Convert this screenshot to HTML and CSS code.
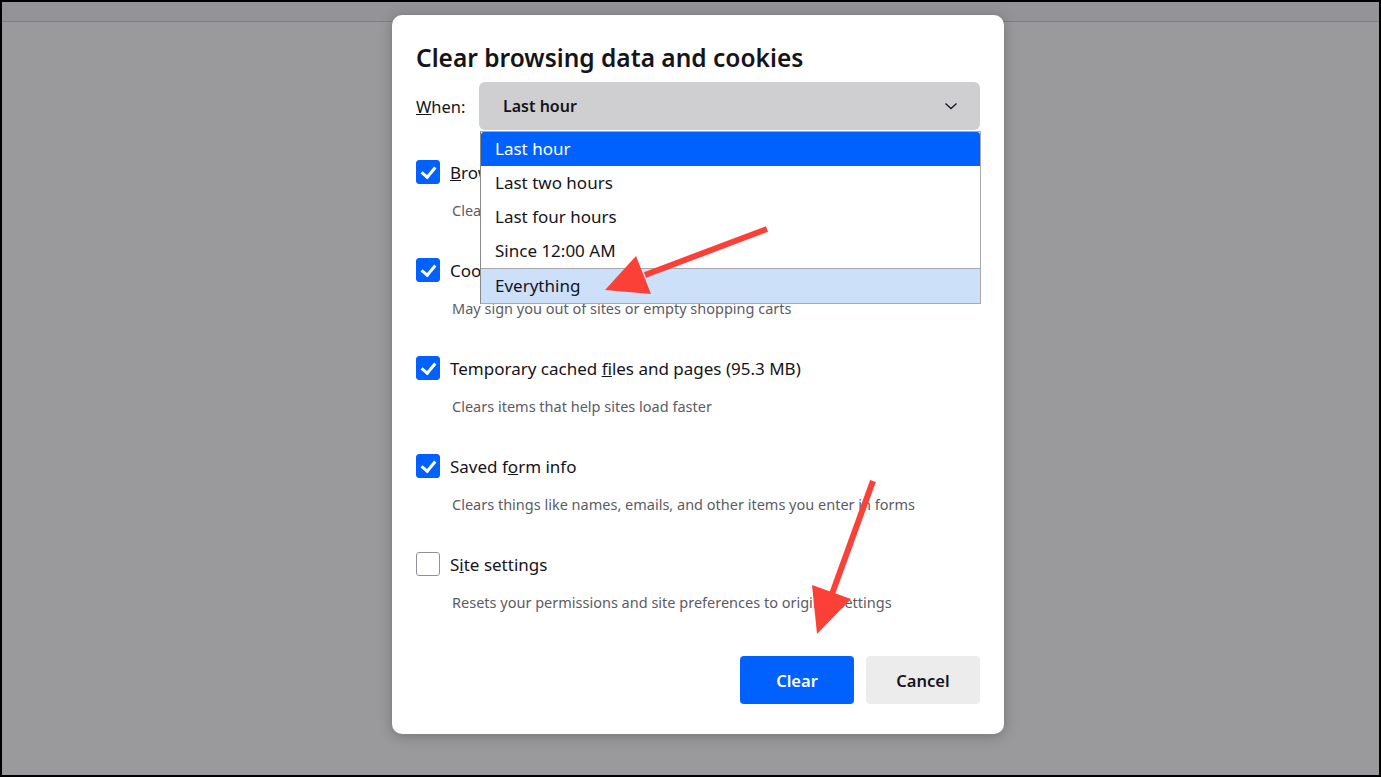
FILE: index.html
```html
<!DOCTYPE html>
<html lang="en">
<head>
    <meta charset="UTF-8">
    <title>Clear browsing data and cookies</title>
    <link rel="stylesheet" href="styles.css">
</head>
<body>
    <div class="frame">
        <div class="topbar"></div>
        <div class="page"></div>

        <div class="dialog">
            <h1>Clear browsing data and cookies</h1>
            <div class="when-row">
                <label><u>W</u>hen:</label>
                <div class="select">
                    <span>Last hour</span>
                    <svg class="chevron" width="14" height="8" viewBox="0 0 14 8"><path d="M1.5 1.5 L7 6.5 L12.5 1.5" fill="none" stroke="#1c1b22" stroke-width="1.4"/></svg>
                </div>
            </div>

            <div class="option">
                <div class="option-head">
                    <span class="check on"></span>
                    <span class="option-label"><u>B</u>rowsing and download history</span>
                </div>
                <div class="option-desc">Clears sites and downloads from history</div>
            </div>
            <div class="option">
                <div class="option-head">
                    <span class="check on"></span>
                    <span class="option-label">Cookies and site data</span>
                </div>
                <div class="option-desc">May sign you out of sites or empty shopping carts</div>
            </div>
            <div class="option">
                <div class="option-head">
                    <span class="check on"></span>
                    <span class="option-label">Temporary cached <u>f</u>iles and pages (95.3 MB)</span>
                </div>
                <div class="option-desc">Clears items that help sites load faster</div>
            </div>
            <div class="option">
                <div class="option-head">
                    <span class="check on"></span>
                    <span class="option-label">Saved f<u>o</u>rm info</span>
                </div>
                <div class="option-desc">Clears things like names, emails, and other items you enter in forms</div>
            </div>
            <div class="option">
                <div class="option-head">
                    <span class="check"></span>
                    <span class="option-label">S<u>i</u>te settings</span>
                </div>
                <div class="option-desc">Resets your permissions and site preferences to original settings</div>
            </div>

            <div class="buttons">
                <button class="btn primary">Clear</button>
                <button class="btn">Cancel</button>
            </div>

            <ul class="dropdown">
                <li class="selected">Last hour</li>
                <li>Last two hours</li>
                <li>Last four hours</li>
                <li>Since 12:00 AM</li>
                <li class="hovered">Everything</li>
            </ul>
        </div>

        <svg class="arrows" width="1381" height="777" viewBox="0 0 1381 777">
            <line x1="767" y1="229" x2="645" y2="275" stroke="#fb4137" stroke-width="6"/>
            <polygon points="605,290 636,256 651,294" fill="#fb4137"/>
            <line x1="873" y1="481" x2="832" y2="594" stroke="#fb4137" stroke-width="6"/>
            <polygon points="817,634 812,585 851,599" fill="#fb4137"/>
        </svg>
    </div>
</body>
</html>
```

FILE: styles.css
```css
body {
    margin: 0;
    background-color: #000;
    font-family: "Noto Sans", "Open Sans", sans-serif;
    color: #15141a;
}
.frame {
    position: relative;
    height: 773px;
    margin: 2px;
    background-color: #9a9a9c;
    display: flex;
    flex-direction: column;
    overflow: hidden;
}
.topbar {
    height: 19px;
    background-color: #949397;
    border-bottom: 1px solid #7f7e82;
}
.page {
    flex: 1;
}
.dialog {
    position: absolute;
    left: 390px;
    top: 13px;
    width: 564px;
    padding: 25px 24px 30px;
    background-color: #fff;
    border-radius: 10px;
    box-shadow: 0 2px 14px rgba(0,0,0,0.25);
}
h1 {
    margin: 0;
    font-size: 24.5px;
    line-height: 36px;
    font-weight: 600;
}
.when-row {
    display: flex;
    align-items: center;
    margin-top: 6px;
}
.when-row label {
    font-size: 16.5px;
    width: 63px;
}
.select {
    flex: 1;
    height: 48px;
    box-sizing: border-box;
    padding: 0 22px 0 24px;
    background-color: #cfcfd1;
    border-radius: 6px;
    display: flex;
    align-items: center;
    justify-content: space-between;
    font-size: 16px;
    font-weight: 600;
}
.option {
    margin-top: 30px;
}
.option + .option {
    margin-top: 38px;
}
.option-head {
    display: flex;
    align-items: center;
    height: 24px;
}
.check {
    width: 24px;
    height: 24px;
    box-sizing: border-box;
    border: 1px solid #8f8f9d;
    border-radius: 3px;
    margin-right: 10px;
    position: relative;
}
.check.on {
    background-color: #0061ff;
    border-color: #0061ff;
}
.check.on::after {
    content: "";
    position: absolute;
    left: 7px;
    top: 3px;
    width: 6px;
    height: 11px;
    border: solid #fff;
    border-width: 0 3px 3px 0;
    transform: rotate(40deg);
}
.option-label {
    font-size: 17px;
}
.option-desc {
    margin: 16px 0 0 36px;
    font-size: 14.5px;
    line-height: 20px;
    color: #5b5b66;
}
.buttons {
    display: flex;
    justify-content: flex-end;
    gap: 12px;
    margin-top: 44px;
}
.btn {
    width: 114px;
    height: 48px;
    border: none;
    border-radius: 4px;
    background-color: #ececec;
    color: #15141a;
    font-family: inherit;
    font-size: 16.5px;
    font-weight: 600;
}
.btn.primary {
    background-color: #0061ff;
    color: #fff;
}
.dropdown {
    position: absolute;
    left: 88px;
    top: 116px;
    width: 501px;
    box-sizing: border-box;
    margin: 0;
    padding: 0;
    list-style: none;
    background-color: #fff;
    border: 1px solid #a8a8ad;
    border-left-color: #888;
    font-size: 17px;
}
.dropdown li {
    height: 34px;
    line-height: 34px;
    padding-left: 14px;
}
.dropdown li.selected {
    background-color: #0061ff;
    color: #fff;
    border-radius: 3px 3px 0 0;
}
.dropdown li.hovered {
    background-color: #cde0fa;
    border-top: 1px solid #a8a8ad;
}
.arrows {
    position: absolute;
    left: -2px;
    top: -2px;
    pointer-events: none;
}
```
